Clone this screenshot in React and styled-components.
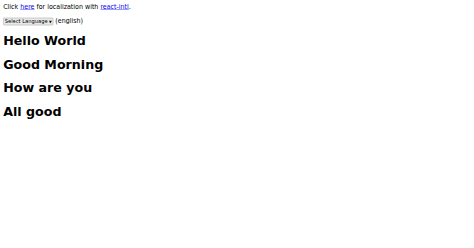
import React, { useState } from 'react';
import styled, { createGlobalStyle } from 'styled-components';

const GlobalStyle = createGlobalStyle`
  html, body {
    margin: 0;
    padding: 0;
    background: #ffffff;
  }
`;

const Frame = styled.div`
  width: 100vw;
  height: 100vh;
  overflow: hidden;
`;

// the reference is a 1200px wide page shown at 474px wide, so the page is laid out
// at full size and shrunk as one piece (small fonts would be clamped otherwise)
const Page = styled.div`
  width: 1200px;
  box-sizing: border-box;
  padding: 8px;
  transform: scale(0.395);
  transform-origin: 0 0;
  font-family: 'DejaVu Sans', sans-serif;
  font-size: 16px;
  color: #000000;
`;

const Intro = styled.div``;

const Link = styled.a`
  color: #0000ee;
  text-decoration: underline;
`;

const LanguageRow = styled.p`
  margin: 17px 0 16px;
`;

const SelectBox = styled.span`
  position: relative;
  display: inline-block;
  vertical-align: middle;
`;

const LanguageSelect = styled.select`
  appearance: none;
  display: block;
  width: 127px;
  height: 19px;
  padding: 0 12px 0 3px;
  border: 1px solid #8a8a8a;
  border-radius: 3px;
  background: #e9e9e9;
  font-family: 'DejaVu Sans', sans-serif;
  font-size: 13px;
  color: #000000;
`;

const Arrow = styled.span`
  position: absolute;
  right: 4px;
  top: 0;
  font-size: 9px;
  line-height: 19px;
  pointer-events: none;
`;

const Greeting = styled.h1`
  font-size: 32px;
  font-weight: bold;
  line-height: 38px;
  margin: 21.44px 0;
`;

const greetings = {
  english: ['Hello World', 'Good Morning', 'How are you', 'All good'],
  french: ['Bonjour le monde', 'Bonjour', 'Comment allez-vous', 'Tout va bien']
};

const App = () => {
  const [lang, setLang] = useState('english');

  return (
    <Frame>
      <GlobalStyle />
      <Page>
        <Intro>
          Click <Link href="#">here</Link> for localization with{' '}
          <Link href="#">react-intl</Link>.
        </Intro>
        <LanguageRow>
          <SelectBox>
            <LanguageSelect value="" onChange={e => setLang(e.target.value)}>
              <option value="" disabled>
                Select Language
              </option>
              <option value="english">English</option>
              <option value="french">French</option>
            </LanguageSelect>
            <Arrow>▼</Arrow>
          </SelectBox>{' '}
          ({lang})
        </LanguageRow>
        {greetings[lang].map(text => (
          <Greeting key={text}>{text}</Greeting>
        ))}
      </Page>
    </Frame>
  );
};

export default App;
